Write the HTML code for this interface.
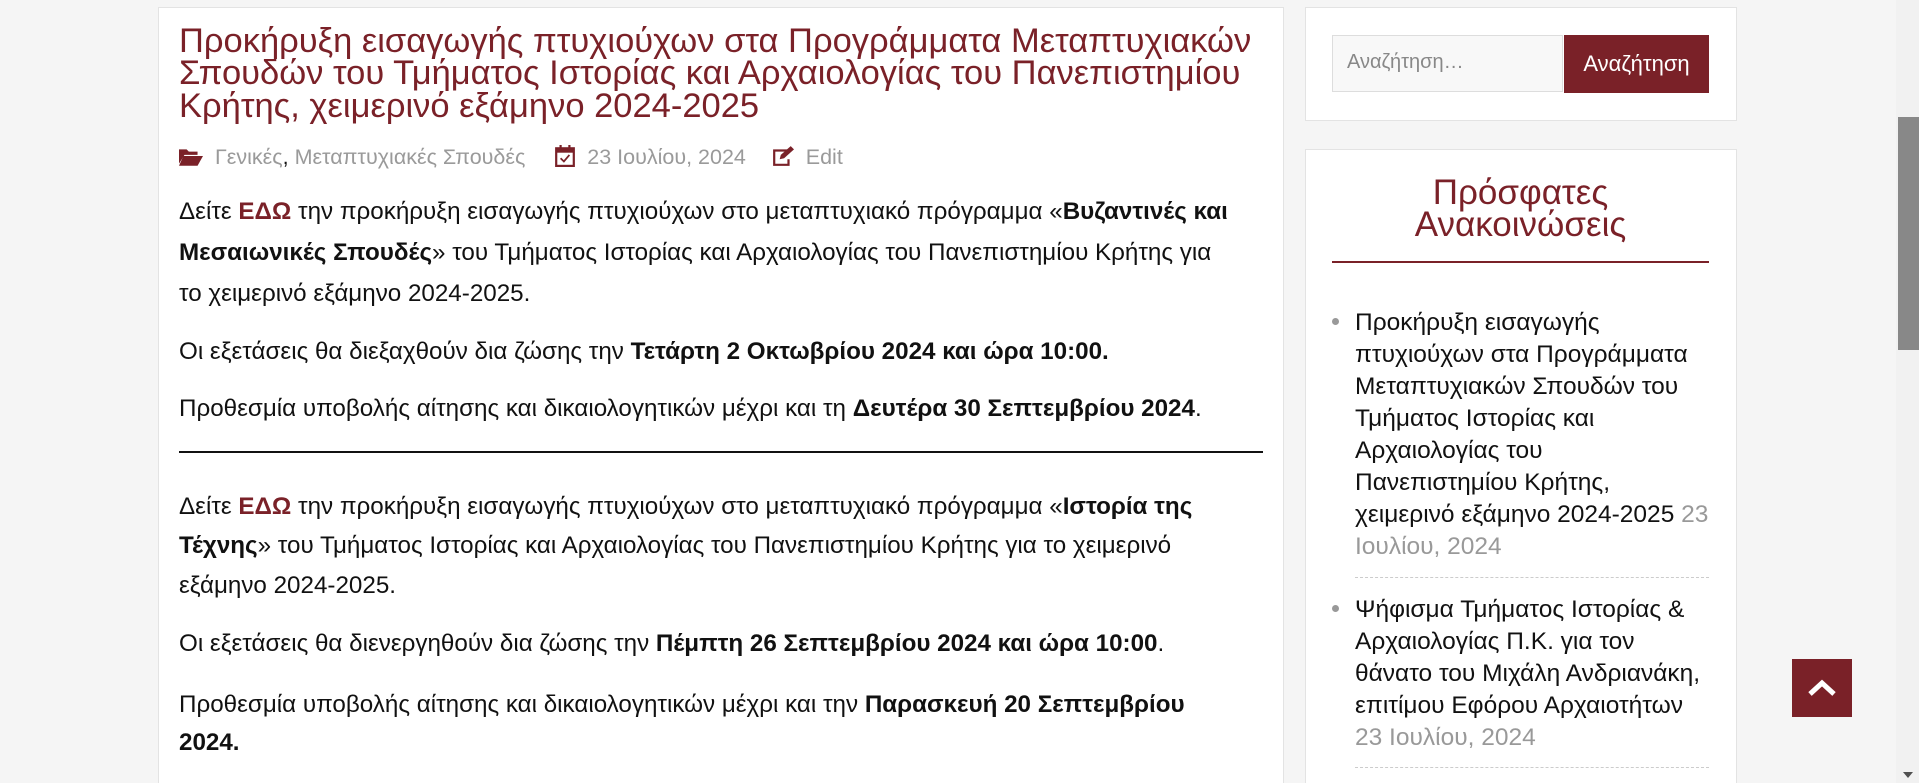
<!DOCTYPE html>
<html><head><meta charset="utf-8"><style>
html,body{margin:0;padding:0;width:1919px;height:783px;overflow:hidden;background:#f5f5f5;font-family:"Liberation Sans","DejaVu Sans",sans-serif;}
.card{position:absolute;background:#fff;border:1px solid #e3e3e3;box-sizing:border-box;}
.t{position:absolute;white-space:nowrap;}
.title{color:#7a2128;font-size:34.5px;left:179px;}
.meta{color:#9a9a9a;font-size:21.5px;top:145px;left:179px;}
.b{color:#111;font-size:24.2px;left:179px;}
.b b{font-weight:bold}
.red{color:#7a2128;font-weight:bold}
.s{color:#111;font-size:24.5px;left:1355px;}
.g{color:#999}
.dot{position:absolute;width:7px;height:7px;border-radius:50%;background:#999;left:1332px;}
</style></head><body>
<div class="card" style="left:158px;top:7px;width:1126px;height:776px;border-bottom:none"></div>
<div class="card" style="left:1305px;top:7px;width:432px;height:114px"></div>
<div class="card" style="left:1305px;top:149px;width:432px;height:634px;border-bottom:none"></div>

<div class="t title" style="top:22px">Προκήρυξη εισαγωγής πτυχιούχων στα Προγράμματα Μεταπτυχιακών</div>
<div class="t title" style="top:54px">Σπουδών του Τμήματος Ιστορίας και Αρχαιολογίας του Πανεπιστημίου</div>
<div class="t title" style="top:87px">Κρήτης, χειμερινό εξάμηνο 2024-2025</div>

<div class="t meta">
<svg width="24" height="19" viewBox="0 0 22 17" style="vertical-align:-2px"><path d="M0 2h7l2 2h8v3H5L0 15z" fill="#7a2128"/><path d="M4 8h18l-5 9H0z" fill="#7a2128"/></svg>
&nbsp;Γενικές<span style="color:#111">,</span> Μεταπτυχιακές Σπουδές
<span style="display:inline-block;width:18px"></span>
<svg width="20" height="22" viewBox="0 0 18 20" style="vertical-align:-3px"><rect x="1" y="3" width="16" height="16" fill="none" stroke="#7a2128" stroke-width="2"/><rect x="1" y="3" width="16" height="4" fill="#7a2128"/><rect x="4" y="0" width="2" height="5" fill="#7a2128"/><rect x="12" y="0" width="2" height="5" fill="#7a2128"/><path d="M5 12l3 3 5-6" fill="none" stroke="#7a2128" stroke-width="1.6"/></svg>
&nbsp;23 Ιουλίου, 2024
<span style="display:inline-block;width:14px"></span>
<svg width="22" height="20" viewBox="0 0 20 18" style="vertical-align:-2px"><path d="M14 4H2v13h13v-5" fill="none" stroke="#7a2128" stroke-width="2"/><path d="M7 12l1-4 9-8 3 3-9 8z" fill="#7a2128"/></svg>
&nbsp;Edit</div>

<div class="t b" style="top:198px">Δείτε <span class="red">ΕΔΩ</span> την προκήρυξη εισαγωγής πτυχιούχων στο μεταπτυχιακό πρόγραμμα «<b>Βυζαντινές και</b></div>
<div class="t b" style="top:239px"><b>Μεσαιωνικές Σπουδές</b>» του Τμήματος Ιστορίας και Αρχαιολογίας του Πανεπιστημίου Κρήτης για</div>
<div class="t b" style="top:280px">το χειμερινό εξάμηνο 2024-2025.</div>
<div class="t b" style="top:338px">Οι εξετάσεις θα διεξαχθούν δια ζώσης την <b>Τετάρτη 2 Οκτωβρίου 2024 και ώρα 10:00.</b></div>
<div class="t b" style="top:395px">Προθεσμία υποβολής αίτησης και δικαιολογητικών μέχρι και τη <b>Δευτέρα 30 Σεπτεμβρίου 2024</b>.</div>
<div style="position:absolute;left:179px;top:451px;width:1084px;height:2px;background:#111"></div>
<div class="t b" style="top:493px">Δείτε <span class="red">ΕΔΩ</span> την προκήρυξη εισαγωγής πτυχιούχων στο μεταπτυχιακό πρόγραμμα «<b>Ιστορία της</b></div>
<div class="t b" style="top:532px"><b>Τέχνης</b>» του Τμήματος Ιστορίας και Αρχαιολογίας του Πανεπιστημίου Κρήτης για το χειμερινό</div>
<div class="t b" style="top:572px">εξάμηνο 2024-2025.</div>
<div class="t b" style="top:630px">Οι εξετάσεις θα διενεργηθούν δια ζώσης την <b>Πέμπτη 26 Σεπτεμβρίου 2024 και ώρα 10:00</b>.</div>
<div class="t b" style="top:691px">Προθεσμία υποβολής αίτησης και δικαιολογητικών μέχρι και την <b>Παρασκευή 20 Σεπτεμβρίου</b></div>
<div class="t b" style="top:729px"><b>2024.</b></div>

<div style="position:absolute;left:1332px;top:35px;width:231px;height:57px;border:1px solid #ddd;background:#f8f8f8;box-sizing:border-box"></div>
<div class="t" style="left:1347px;top:51px;font-size:20px;color:#888">Αναζήτηση…</div>
<div style="position:absolute;left:1564px;top:35px;width:145px;height:58px;background:#7a2128;color:#fff;font-size:22px;text-align:center;line-height:58px">Αναζήτηση</div>

<div class="t" style="left:1332px;width:377px;top:177px;text-align:center;color:#7a2128;font-size:35px;line-height:32px;white-space:normal">Πρόσφατες<br>Ανακοινώσεις</div>
<div style="position:absolute;left:1332px;top:261px;width:377px;height:2px;background:#7a2128"></div>

<div class="dot" style="top:318px"></div>
<div class="t s" style="top:307px;line-height:32px">Προκήρυξη εισαγωγής<br>πτυχιούχων στα Προγράμματα<br>Μεταπτυχιακών Σπουδών του<br>Τμήματος Ιστορίας και<br>Αρχαιολογίας του<br>Πανεπιστημίου Κρήτης,<br>χειμερινό εξάμηνο 2024-2025 <span class="g">23</span><br><span class="g">Ιουλίου, 2024</span></div>
<div style="position:absolute;left:1355px;top:577px;width:354px;border-top:1px dashed #ccc"></div>
<div class="dot" style="top:605px"></div>
<div class="t s" style="top:594px;line-height:32px">Ψήφισμα Τμήματος Ιστορίας &amp;<br>Αρχαιολογίας Π.Κ. για τον<br>θάνατο του Μιχάλη Ανδριανάκη,<br>επιτίμου Εφόρου Αρχαιοτήτων<br><span class="g">23 Ιουλίου, 2024</span></div>
<div style="position:absolute;left:1355px;top:767px;width:354px;border-top:1px dashed #ccc"></div>

<div style="position:absolute;left:1792px;top:659px;width:60px;height:58px;background:#7a2128"></div>
<svg style="position:absolute;left:1792px;top:659px" width="60" height="58"><path d="M18 35l12-11 12 11" fill="none" stroke="#fff" stroke-width="5"/></svg>

<div style="position:absolute;left:1896px;top:0;width:23px;height:783px;background:#f1f1f1"></div>
<div style="position:absolute;left:1898px;top:117px;width:21px;height:233px;background:#888"></div>
<svg style="position:absolute;left:1900px;top:770px" width="16" height="10"><path d="M3 2h10l-5 6z" fill="#505050"/></svg>
</body></html>
